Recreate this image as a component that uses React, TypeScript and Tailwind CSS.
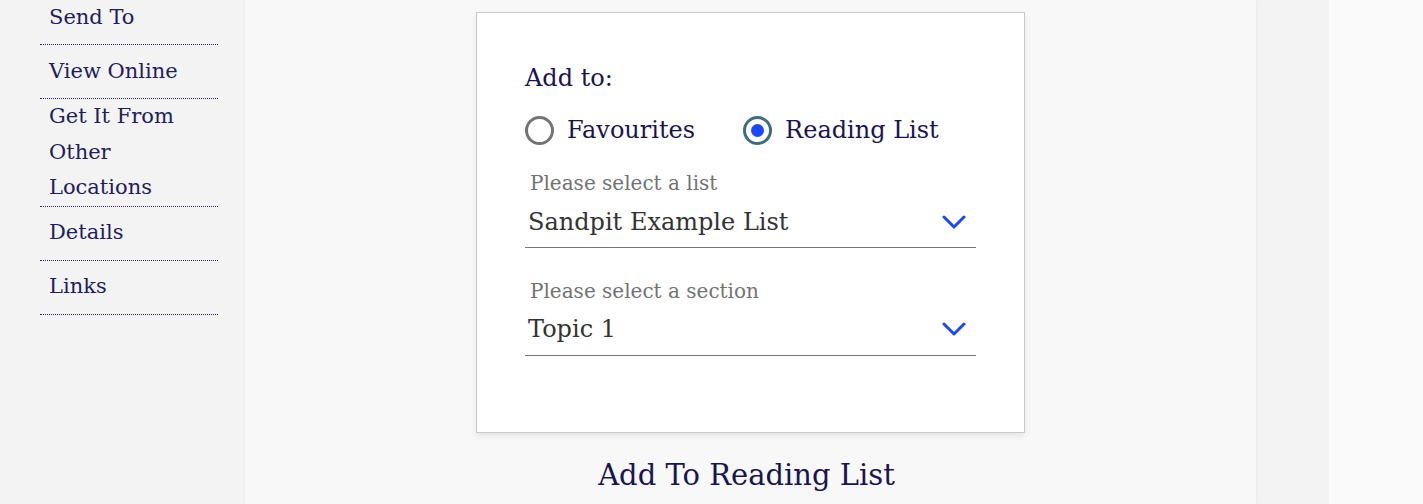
const navItems = [
  { label: "Send To", lines: 1 },
  { label: "View Online", lines: 1 },
  { label: "Get It From Other Locations", lines: 3 },
  { label: "Details", lines: 1 },
  { label: "Links", lines: 1 },
];

const serif = "font-['DejaVu_Serif','Liberation_Serif',serif]";

function Chevron() {
  return (
    <svg width="24" height="14" viewBox="0 0 24 14" fill="none" className="shrink-0">
      <path d="M2 2l10 10L22 2" stroke="#1a47ff" strokeWidth="3" strokeLinecap="round" strokeLinejoin="round" />
    </svg>
  );
}

function Radio({ checked, label }: { checked?: boolean; label: string }) {
  return (
    <label className="flex items-center gap-[13px] cursor-pointer">
      {checked ? (
        <span className="w-[29px] h-[29px] rounded-full border-[3px] border-[#3f6f7e] flex items-center justify-center">
          <span className="w-[13px] h-[13px] rounded-full bg-[#1a47ff]" />
        </span>
      ) : (
        <span className="w-[29px] h-[29px] rounded-full border-[3px] border-[#747474]" />
      )}
      <span className="text-[24px] leading-[30px] text-[#1a1550]">{label}</span>
    </label>
  );
}

function SelectBox({ label, value, gap }: { label: string; value: string; gap: string }) {
  return (
    <div>
      <div className="pl-[5px] text-[20px] leading-[24px] text-[#737373]">{label}</div>
      <div className={`${gap} flex items-center justify-between border-b border-[#767676] pl-[3px] pr-[10px]`}>
        <span className="text-[24px] leading-[30px] text-[#333333]">{value}</span>
        <Chevron />
      </div>
    </div>
  );
}

export default function App() {
  return (
    <div className={`${serif} flex h-[504px] overflow-hidden bg-[#fafafa]`}>
      <aside className="w-[244px] shrink-0 bg-[#f3f3f3]">
        <ul className="ml-[40px] w-[178px] -mt-[9px]">
          {navItems.map((item) => (
            <li
              key={item.label}
              className={`border-b border-dotted border-[#2a2666] px-[9px] flex items-center text-[21px] leading-[35.5px] text-[#221d5c] ${
                item.lines > 1 ? "min-h-[107px]" : "min-h-[54px]"
              }`}
            >
              <span className={item.lines > 1 ? "w-[140px]" : ""}>{item.label}</span>
            </li>
          ))}
        </ul>
      </aside>

      <main className="w-[1012px] shrink-0 bg-[#f8f8f8] border-l border-[#f0f0f0] flex flex-col items-center pt-[12px]">
        <div className="w-[549px] bg-white border border-[#c9c9c9] shadow-[0_3px_6px_rgba(0,0,0,0.08)] px-[48px] pt-[50px] pb-[76px]">
          <div className="text-[24px] leading-[30px] text-[#1a1550]">Add to:</div>
          <div className="mt-[22px] flex items-center gap-[48px]">
            <Radio label="Favourites" />
            <Radio checked label="Reading List" />
          </div>
          <div className="mt-[26px]">
            <SelectBox label="Please select a list" value="Sandpit Example List" gap="mt-[12px] pb-[10px]" />
          </div>
          <div className="mt-[31px]">
            <SelectBox label="Please select a section" value="Topic 1" gap="mt-[11px] pb-[11px]" />
          </div>
        </div>
        <h2 className="mt-[24px] mr-[8px] text-[29px] leading-[36px] text-[#1a1550]">Add To Reading List</h2>
      </main>

      <div className="w-[73px] shrink-0 bg-[#f3f3f3] shadow-[inset_2px_0_3px_-2px_rgba(0,0,0,0.06)]" />
      <div className="flex-1 bg-[#fafafa]" />
    </div>
  );
}
